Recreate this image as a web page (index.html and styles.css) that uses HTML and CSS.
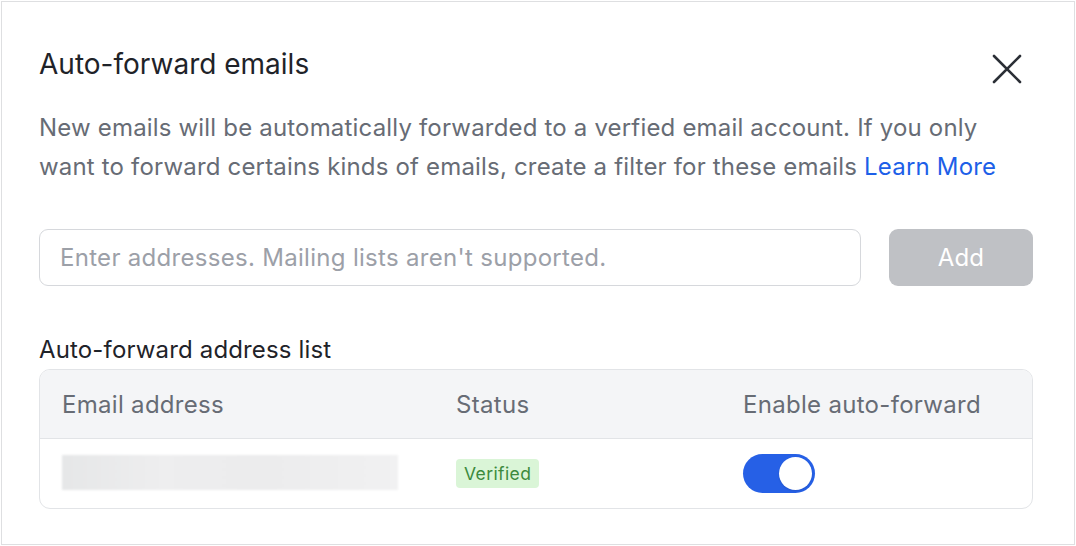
FILE: index.html
```html
<!DOCTYPE html>
<html lang="en">
<head>
<meta charset="utf-8">
<title>Auto-forward emails</title>
<link rel="stylesheet" href="styles.css">
</head>
<body>
<div class="modal">
  <div class="modal-header">
    <h1 class="title">Auto-forward emails</h1>
    <button class="close" aria-label="Close">
      <svg width="30" height="30" viewBox="0 0 30 30"><path d="M2 2 L28 28 M28 2 L2 28" stroke="#2b2f36" stroke-width="2.6" stroke-linecap="round" fill="none"/></svg>
    </button>
  </div>
  <p class="desc">New emails will be automatically forwarded to a verfied email account. If you only want to forward certains kinds of emails, create a filter for these emails <a href="#" class="link">Learn More</a></p>
  <div class="add-row">
    <input class="addr-input" type="text" placeholder="Enter addresses. Mailing lists aren't supported.">
    <button class="add-btn">Add</button>
  </div>
  <div class="list-label">Auto-forward address list</div>
  <div class="table">
    <div class="thead">
      <div class="cell">Email address</div>
      <div class="cell">Status</div>
      <div class="cell">Enable auto-forward</div>
    </div>
    <div class="trow">
      <div class="cell"><div class="blurred"></div></div>
      <div class="cell"><span class="badge">Verified</span></div>
      <div class="cell"><span class="toggle"><span class="knob"></span></span></div>
    </div>
  </div>
</div>
</body>
</html>
```
FILE: styles.css
```css
* { box-sizing: border-box; }
html, body { margin: 0; padding: 0; background: #ffffff; }
body { font-family: Inter, "Noto Sans", "Liberation Sans", sans-serif; }

.modal {
  margin: 1px 0 0 1px;
  width: 1074px;
  height: 544px;
  border: 1px solid #dedfe1;
  padding: 0 41px 0 37px;
  background: #fff;
}

.modal-header {
  display: flex;
  justify-content: space-between;
  align-items: flex-start;
  padding-top: 45px;
}
.title {
  margin: 0;
  font-size: 28px;
  line-height: 34px;
  font-weight: 400;
  color: #1f2329;
  letter-spacing: 0;
}
.close {
  border: 0;
  background: none;
  padding: 0;
  width: 30px;
  height: 30px;
  margin-right: 11px;
  margin-top: 7px;
  cursor: pointer;
}
.close svg { display: block; }

.desc {
  margin: 24px 0 0;
  font-size: 24px;
  line-height: 39px;
  color: #676c75;
  letter-spacing: 0.18px;
}
.link { color: #1d5fe8; text-decoration: none; }

.add-row {
  display: flex;
  gap: 28px;
  margin-top: 43px;
}
.addr-input {
  flex: 1;
  height: 57px;
  border: 1px solid #d6d8dc;
  border-radius: 9px;
  padding: 0 20px;
  font-family: inherit;
  font-size: 24px;
  color: #1f2329;
  outline: none;
  letter-spacing: 0.3px;
}
.addr-input::placeholder { color: #9ca0a8; }
.add-btn {
  width: 144px;
  height: 57px;
  border: 0;
  border-radius: 9px;
  background: #bfc1c5;
  color: #fff;
  font-family: inherit;
  font-size: 24px;
  letter-spacing: 0.2px;
}

.list-label {
  margin-top: 48px;
  font-size: 24px;
  line-height: 32px;
  color: #1f2329;
  letter-spacing: 0.15px;
}

.table {
  margin-top: 3px;
  border: 1px solid #e2e4e7;
  border-radius: 11px;
  overflow: hidden;
}
.thead, .trow {
  display: grid;
  grid-template-columns: 394px 287px 1fr;
  padding-left: 22px;
  align-items: center;
}
.thead {
  height: 69px;
  background: #f4f5f7;
  border-bottom: 1px solid #e2e4e7;
  font-size: 24px;
  color: #676c75;
  letter-spacing: 0.3px;
}
.trow { height: 69px; }
.cell { display: flex; align-items: center; }

.blurred {
  width: 336px;
  height: 35px;
  margin-top: -3px;
  background: linear-gradient(90deg, #e6e7e8 0%, #eeeeef 30%, #ececed 60%, #f1f1f2 100%);
  filter: blur(1px);
}
.badge {
  display: inline-block;
  height: 29px;
  line-height: 29px;
  padding: 0 8px;
  border-radius: 4px;
  background: #daf5d7;
  color: #3c8a3d;
  font-size: 17.5px;
  letter-spacing: 0.4px;
}
.toggle {
  display: inline-flex;
  align-items: center;
  justify-content: flex-end;
  width: 72px;
  height: 39px;
  border-radius: 20px;
  background: #2660e6;
  padding: 3px;
}
.knob {
  width: 33px;
  height: 33px;
  border-radius: 50%;
  background: #fff;
  box-shadow: 0 1px 2px rgba(0,0,0,0.12);
}
```
